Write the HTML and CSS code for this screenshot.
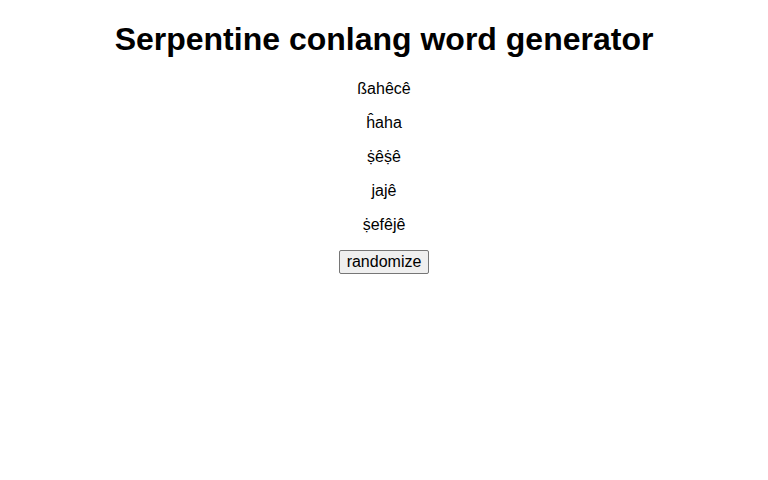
FILE: index.html
```html
<!DOCTYPE html>
<html>
<head>
<meta charset="utf-8">
<link rel="stylesheet" href="styles.css">
</head>
<body>
<div class="app">
<h1 class="title">Serpentine conlang word generator</h1>
<p class="word">ßahêcê</p>
<p class="word">ĥaha</p>
<p class="word">ṩêṩê</p>
<p class="word">jajê</p>
<p class="word">ṩefêjê</p>
<div class="actions"><button class="btn">randomize</button></div>
</div>
</body>
</html>
```
FILE: styles.css
```css
body {
  margin: 0 8px;
  font-family: "Liberation Sans", Arial, sans-serif;
  background: #fff;
  color: #000;
}
.app {
  text-align: center;
}
.title {
  font-size: 32px;
  font-weight: bold;
  margin: 21.44px 0;
}
.word {
  font-size: 16px;
  margin: 16px 0;
}
.btn {
  font-family: "Liberation Sans", Arial, sans-serif;
  font-size: 16px;
  padding: 2px 7px;
  background: #efefef;
  border: 1px solid #767676;
  border-radius: 2px;
  color: #000;
}
```
